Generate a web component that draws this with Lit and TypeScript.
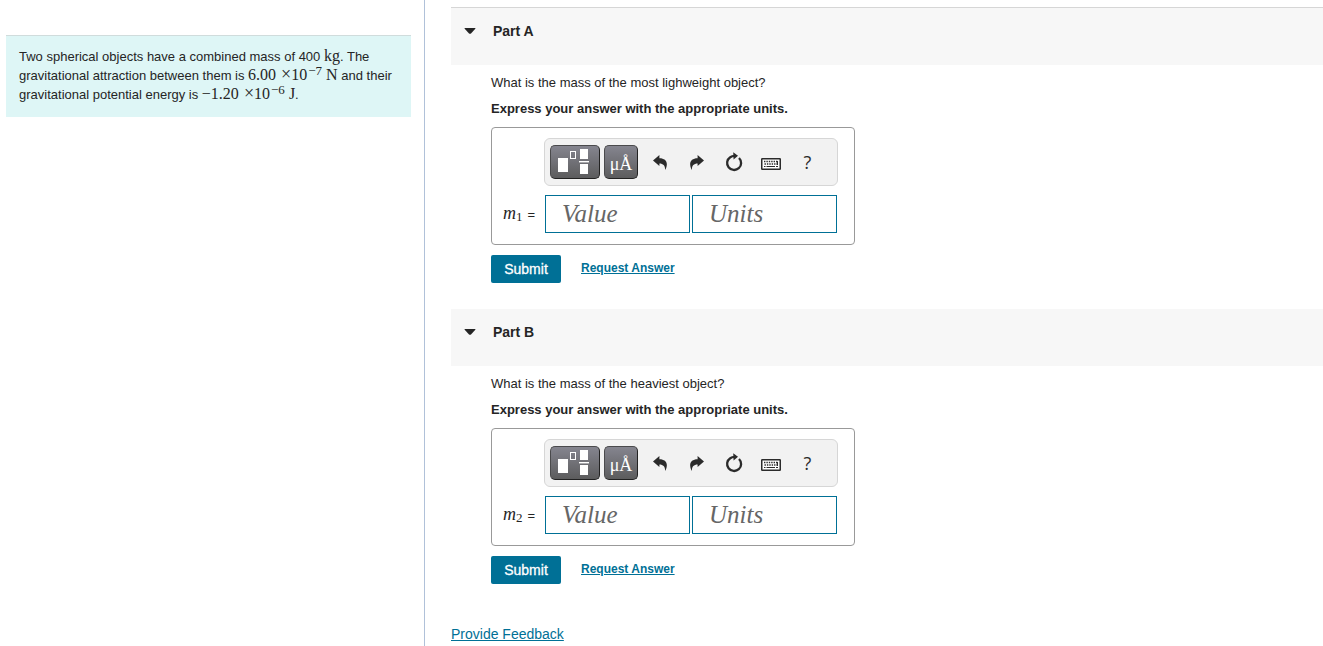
import { LitElement, html, css, svg } from "lit";
import { customElement, property } from "lit/decorators.js";

const palette = css`
  :host {
    --teal: #007096;
    --ink: #252525;
    --sans: "Liberation Sans", Arial, Helvetica, sans-serif;
    --serif: "Liberation Serif", "Times New Roman", serif;
  }
  * {
    box-sizing: border-box;
  }
`;

const undoPath = svg`<path d="M0 5.5 L6.4 0 V3.2 C11.4 3.2 14.2 5.8 13.8 10 C13.6 12 13 13.6 12 15 C12.4 11 10.6 8.6 6.4 8.5 V11 Z" />`;

@customElement("answer-toolbar")
export class AnswerToolbar extends LitElement {
  static styles = [
    palette,
    css`
      :host {
        display: flex;
        align-items: center;
        height: 48px;
        padding: 0 5px;
        background: #f2f2f2;
        border: 1px solid #d6d6d6;
        border-radius: 6px;
      }
      button {
        display: flex;
        align-items: center;
        justify-content: center;
        padding: 0;
        border: 0;
        background: none;
        color: #2b2b2b;
        cursor: pointer;
        width: 37px;
        height: 34px;
      }
      svg {
        display: block;
        fill: currentColor;
      }
      .dark {
        width: 34px;
        margin-right: 3px;
        border: 1px solid #4a4a4c;
        border-right-color: #222;
        border-bottom-color: #222;
        border-radius: 5px;
        background: linear-gradient(#85858f, #5c5c5d);
        color: #fff;
      }
      .templates {
        width: 50px;
        margin-right: 4px;
      }
      .units {
        padding-top: 4px;
        font: 18px/28px var(--serif);
      }
      .help {
        font: 18px/34px "Open Sans", var(--sans);
      }
    `,
  ];

  render() {
    return html`
      <button class="dark templates" aria-label="Templates">
        <svg width="36" height="26" viewBox="0 0 36 26">
          <rect x="1" y="9" width="10" height="14" />
          <rect x="13.5" y="2.5" width="5" height="7" fill="none" stroke="currentColor" />
          <rect x="23" y="0" width="8" height="10" />
          <rect x="22" y="12" width="10" height="1.4" />
          <rect x="23" y="15" width="8" height="10" />
        </svg>
      </button>
      <button class="dark units" aria-label="Symbols">μÅ</button>
      <button aria-label="Undo">
        <svg width="14" height="15" viewBox="0 0 14 15">${undoPath}</svg>
      </button>
      <button aria-label="Redo">
        <svg width="14" height="15" viewBox="0 0 14 15"><g transform="matrix(-1 0 0 1 14 0)">${undoPath}</g></svg>
      </button>
      <button aria-label="Reset">
        <svg width="18" height="20" viewBox="0 0 18 20">
          <path d="M14 6 A7 7 0 1 1 5.2 5.2 Q7 3.9 9.5 3.9" fill="none" stroke="currentColor" stroke-width="2.3" />
          <path d="M8.2 0.2 L13 3.8 L8.6 7.6 Z" />
        </svg>
      </button>
      <button aria-label="Keyboard">
        <svg width="20" height="16" viewBox="0 0 20 16">
          <g transform="translate(0 4)">
            <rect x="0.75" y="0.75" width="18.5" height="10.5" rx="0.5" fill="#fff" stroke="currentColor" stroke-width="1.5" />
            <path d="M3 3.5 H17 M3.5 6 H17" fill="none" stroke="currentColor" stroke-width="1.3" stroke-dasharray="1.4 1" />
            <path d="M3 8.5 H4.5 M5.5 8.5 H14 M15 8.5 H17 M16.4 3 V7" fill="none" stroke="currentColor" stroke-width="1.2" />
          </g>
        </svg>
      </button>
      <button class="help" aria-label="Help">?</button>
    `;
  }
}

@customElement("question-part")
export class QuestionPart extends LitElement {
  @property() name = "";
  @property() question = "";
  @property() index = "";

  static styles = [
    palette,
    css`
      :host {
        display: block;
        font: 13px/19px var(--sans);
        color: var(--ink);
      }
      .head {
        display: flex;
        align-items: flex-start;
        height: 58px;
        padding: 14px 13px;
        border-top: 1px solid var(--part-rule, #fff);
        background: #f7f7f7;
      }
      h2 {
        margin: 0;
        font-size: 14px;
        line-height: 19px;
      }
      .toggle {
        display: flex;
        align-items: center;
        width: 29px;
        height: 18px;
        padding: 0;
        border: 0;
        background: none;
        color: var(--ink);
      }
      .body {
        padding: 8px 0 25px 40px;
      }
      p {
        margin: 0 0 7px;
      }
      .instruction {
        margin-bottom: 9px;
        font-weight: bold;
      }
      .answer {
        display: grid;
        grid-template-columns: 41px 294px;
        row-gap: 9px;
        align-items: center;
        width: 364px;
        padding: 10px 16px 11px 11px;
        border: 1px solid #999;
        border-radius: 4px;
      }
      answer-toolbar {
        grid-column: 2;
      }
      label {
        white-space: nowrap;
      }
      label i {
        font: italic 18px/19px var(--serif);
      }
      sub {
        margin-right: 5px;
        font: 13px/0 var(--serif);
        vertical-align: -2px;
      }
      .fields {
        display: grid;
        grid-template-columns: 1fr 1fr;
        gap: 2px;
        padding: 0 1px;
      }
      input {
        width: 100%;
        min-width: 0;
        height: 38px;
        padding: 0 16px;
        border: 1px solid var(--teal);
        border-radius: 0;
        background: #fff;
        font: italic 25px/36px var(--serif);
        color: var(--ink);
      }
      input::placeholder {
        color: #666;
        opacity: 1;
      }
      .actions {
        display: flex;
        align-items: center;
        gap: 20px;
        margin-top: 10px;
      }
      .submit {
        width: 70px;
        height: 28px;
        padding: 0;
        border: 0;
        border-radius: 2px;
        background: var(--teal);
        color: #fff;
        font: 14px/28px var(--sans);
        -webkit-text-stroke: 0.3px #fff;
      }
      a {
        padding-bottom: 2px;
        color: var(--teal);
        font-size: 12px;
        font-weight: bold;
      }
    `,
  ];

  render() {
    return html`
      <header class="head">
        <button class="toggle" aria-label="Collapse ${this.name}">
          <svg width="12" height="6" viewBox="0 0 12 6"><path d="M1 0 H11 Q12 0 11.3 0.8 L7 5.4 Q6 6 5 5.4 L0.7 0.8 Q0 0 1 0 Z" fill="currentColor" /></svg>
        </button>
        <h2>${this.name}</h2>
      </header>
      <div class="body">
        <p>${this.question}</p>
        <p class="instruction">Express your answer with the appropriate units.</p>
        <div class="answer">
          <answer-toolbar></answer-toolbar>
          <label for="value"><i>m</i><sub>${this.index}</sub>=</label>
          <div class="fields">
            <input id="value" placeholder="Value" />
            <input aria-label="Units" placeholder="Units" />
          </div>
        </div>
        <div class="actions">
          <button class="submit">Submit</button>
          <a href="#">Request Answer</a>
        </div>
      </div>
    `;
  }
}

@customElement("app-root")
export class AppRoot extends LitElement {
  static styles = [
    palette,
    css`
      :host {
        display: grid;
        grid-template-columns: 425px minmax(0, 1fr);
        min-height: 100vh;
        background: #fff;
        color: var(--ink);
        font: 13px/19px var(--sans);
      }
      aside {
        padding: 35px 13px 0 6px;
        border-right: 1px solid #b0c1d9;
      }
      .problem {
        padding: 11px 13px 13px;
        border-top: 1px solid #d0dcdc;
        background: #def6f6;
      }
      .math {
        font-family: var(--serif);
        font-size: 16px;
        line-height: 16px;
        white-space: nowrap;
      }
      .times {
        margin-left: 1px;
        font-size: 18px;
        line-height: 0;
      }
      sup {
        margin-left: 1px;
        font-size: 13px;
        line-height: 0;
        vertical-align: 5px;
      }
      main {
        padding: 7px 0 0 26px;
      }
      .first {
        --part-rule: #d6d6d6;
      }
      .feedback {
        display: inline-block;
        margin-top: 16px;
        color: var(--teal);
        font-size: 14px;
      }
    `,
  ];

  render() {
    const power = (base: string, exponent: string, unit: string) =>
      html`<span class="math">${base} <span class="times">×</span>10<sup>${exponent}</sup> ${unit}</span>`;
    return html`
      <aside>
        <div class="problem">
          Two spherical objects have a combined mass of 400 <span class="math">kg</span>. The gravitational attraction
          between them is ${power("6.00", "−7", "N")} and their gravitational potential energy is
          ${power("−1.20", "−6", "J")}.
        </div>
      </aside>
      <main>
        <question-part class="first" name="Part A" index="1" question="What is the mass of the most lighweight object?"></question-part>
        <question-part name="Part B" index="2" question="What is the mass of the heaviest object?"></question-part>
        <a class="feedback" href="#">Provide Feedback</a>
      </main>
    `;
  }
}
